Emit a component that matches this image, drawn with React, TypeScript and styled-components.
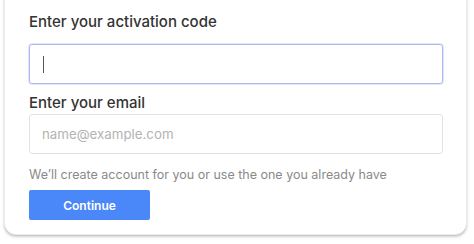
import React from "react";
import styled, { createGlobalStyle } from "styled-components";

const Global = createGlobalStyle`
  html, body { margin: 0; padding: 0; background: #ffffff; }
  body { font-family: Inter, "Noto Sans", sans-serif; -webkit-font-smoothing: antialiased; }
  * { box-sizing: border-box; }
`;

const Page = styled.div`
  width: 474px;
  height: 244px;
  overflow: hidden;
  padding: 0 7px 0 4px;
`;

const Card = styled.div`
  margin-top: -12px;
  background: #fff;
  border: 1px solid #ececec;
  border-radius: 12px;
  box-shadow: 0 2px 3px rgba(0, 0, 0, 0.18), 0 1px 1px rgba(0, 0, 0, 0.08);
  padding: 23px 23px 14px 24px;
  display: flex;
  flex-direction: column;
`;

const Label = styled.label<{ $gap?: number }>`
  font-size: 15px;
  font-weight: 500;
  color: #333;
  line-height: 20px;
  margin-bottom: ${(p) => p.$gap ?? 12}px;
`;

const Field = styled.div<{ $focused?: boolean }>`
  height: 40px;
  border: 1px solid ${(p) => (p.$focused ? "#a7b8f2" : "#e3e3e3")};
  border-radius: 3px;
  display: flex;
  align-items: center;
  padding: 0 12px;
  margin-bottom: 9px;
  box-shadow: ${(p) => (p.$focused ? "0 0 0 1px rgba(167,184,242,0.35)" : "none")};
`;

const Caret = styled.span`
  width: 1px;
  height: 17px;
  background: #555;
  margin-left: 1px;
`;

const Placeholder = styled.span`
  font-size: 13.3px;
  color: #b3b3b3;
`;

const Hint = styled.p`
  margin: 3px 0 6px;
  font-size: 12.5px;
  color: #8a8a8a;
  line-height: 18px;
`;

const Button = styled.button`
  width: 121px;
  height: 30px;
  border: none;
  border-radius: 2px;
  background: #4a87f8;
  color: #fff;
  font-family: inherit;
  font-size: 12px;
  font-weight: 600;
`;

export default function App() {
  return (
    <>
      <Global />
      <Page>
        <Card>
          <Label>Enter your activation code</Label>
          <Field $focused>
            <Caret />
          </Field>
          <Label $gap={1}>Enter your email</Label>
          <Field>
            <Placeholder>name@example.com</Placeholder>
          </Field>
          <Hint>We’ll create account for you or use the one you already have</Hint>
          <Button>Continue</Button>
        </Card>
      </Page>
    </>
  );
}
